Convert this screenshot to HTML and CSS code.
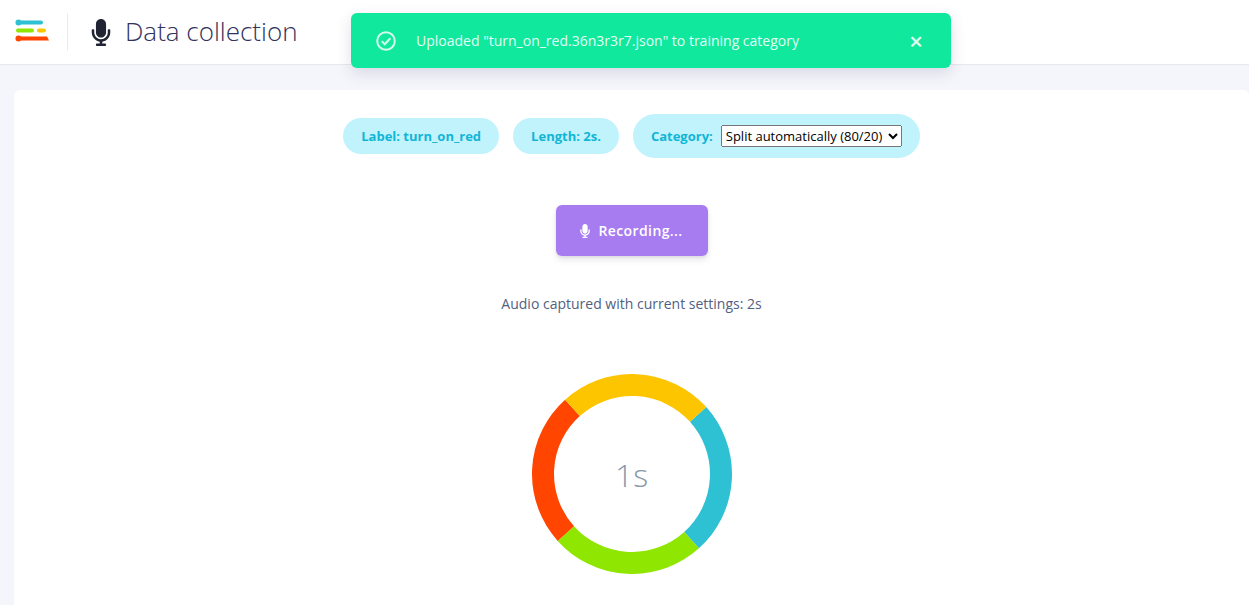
FILE: index.html
```html
<!DOCTYPE html>
<html lang="en">
<head>
    <meta charset="UTF-8">
    <meta name="viewport" content="width=device-width, initial-scale=1.0">
    <title>Data collection</title>
    <link rel="stylesheet" href="styles.css">
</head>
<body>
    <header class="topbar">
        <svg class="logo" width="34" height="24" viewBox="0 0 34 24">
            <rect x="1" y="1.5" width="27" height="4" rx="2" fill="#2ec0d3"/>
            <circle cx="3.5" cy="3.5" r="3" fill="#2ec0d3"/>
            <rect x="1" y="9.5" width="18" height="4" rx="2" fill="#8fe600"/>
            <rect x="22" y="9.5" width="9" height="4" rx="2" fill="#fdc500"/>
            <path d="M3 17.5H32L34 21.5H3Z" fill="#ff4500"/>
            <circle cx="3.5" cy="19.5" r="3" fill="#ff4500"/>
        </svg>
        <div class="divider"></div>
        <svg class="title-icon" width="20" height="27" viewBox="0 0 352 512">
            <path fill="#1f2333" d="M176 352c53 0 96-43 96-96V96c0-53-43-96-96-96S80 43 80 96v160c0 53 43 96 96 96zm160-160h-16c-9 0-16 7-16 16v48c0 75-64.500 134-140 127-66-6-116-65-116-131v-44c0-9-7-16-16-16H16c-9 0-16 7-16 16v40c0 90 64 170 152 182v34H96c-9 0-16 7-16 16v16c0 9 7 16 16 16h160c9 0 16-7 16-16v-16c0-9-7-16-16-16h-56v-34c86-12 152-86 152-174v-48c0-9-7-16-16-16z"/>
        </svg>
        <h1 class="title">Data collection</h1>
    </header>

    <div class="toast">
        <svg class="toast-icon" width="20" height="20" viewBox="0 0 20 20" fill="none" stroke="#d5fbec" stroke-width="2">
            <circle cx="10" cy="10" r="8.800"/>
            <path d="M5.800 10.300l3 3 5.500-6"/>
        </svg>
        <span class="toast-text">Uploaded "turn_on_red.36n3r3r7.json" to training category</span>
        <span class="toast-close">&times;</span>
    </div>

    <main class="card">
        <div class="badges">
            <span class="badge">Label: turn_on_red</span>
            <span class="badge">Length: 2s.</span>
            <span class="badge badge-select">
                Category:
                <select class="category">
                    <option>Split automatically (80/20)</option>
                </select>
            </span>
        </div>

        <button class="record-btn">
            <svg width="10" height="14" viewBox="0 0 352 512">
                <path fill="#fff" d="M176 352c53 0 96-43 96-96V96c0-53-43-96-96-96S80 43 80 96v160c0 53 43 96 96 96zm160-160h-16c-9 0-16 7-16 16v48c0 75-64.500 134-140 127-66-6-116-65-116-131v-44c0-9-7-16-16-16H16c-9 0-16 7-16 16v40c0 90 64 170 152 182v34H96c-9 0-16 7-16 16v16c0 9 7 16 16 16h160c9 0 16-7 16-16v-16c0-9-7-16-16-16h-56v-34c86-12 152-86 152-174v-48c0-9-7-16-16-16z"/>
            </svg>
            Recording...
        </button>

        <p class="captured">Audio captured with current settings: 2s</p>

        <div class="timer">
            <svg width="200" height="200" viewBox="0 0 200 200" fill="none" stroke-width="22">
                <circle class="seg" cx="100" cy="100" r="89" pathLength="360" stroke="#2ec0d3" stroke-dasharray="90 270" transform="rotate(-42 100 100)"/>
                <circle class="seg" cx="100" cy="100" r="89" pathLength="360" stroke="#8fe600" stroke-dasharray="90 270" transform="rotate(48 100 100)"/>
                <circle class="seg" cx="100" cy="100" r="89" pathLength="360" stroke="#ff4500" stroke-dasharray="90 270" transform="rotate(138 100 100)"/>
                <circle class="seg" cx="100" cy="100" r="89" pathLength="360" stroke="#fdc500" stroke-dasharray="90 270" transform="rotate(228 100 100)"/>
            </svg>
            <span class="timer-text">1s</span>
        </div>
    </main>
</body>
</html>
```

FILE: styles.css
```css
html, body {
    height: 100%;
}
body {
    margin: 0;
    overflow: hidden;
    background-color: #f5f6fb;
    font-family: "Open Sans", sans-serif;
    color: #525f7f;
}
.topbar {
    display: flex;
    align-items: center;
    height: 64px;
    background: #fff;
    border-bottom: 1px solid #e6e8ee;
}
.logo {
    margin-left: 15px;
    margin-bottom: 3px;
}
.divider {
    width: 1px;
    height: 38px;
    margin: 0 23px 0 18px;
    background: #e9ebef;
}
.title {
    margin: 0 0 2px 14px;
    font-size: 26px;
    font-weight: 300;
    line-height: 1;
    color: #32325d;
}
.toast {
    position: absolute;
    top: 13px;
    left: 351px;
    display: flex;
    align-items: center;
    box-sizing: border-box;
    width: 600px;
    height: 55px;
    padding: 0 28px 0 25px;
    border-radius: 6px;
    background: #0fe89d;
    box-shadow: 0 5px 15px rgba(50, 50, 93, 0.15);
    color: #e4fcf3;
    font-size: 14px;
}
.toast-text {
    flex: 1;
    margin-left: 20px;
}
.toast-close {
    font-size: 24px;
    font-weight: 600;
    line-height: 1;
}
.card {
    display: flex;
    flex-direction: column;
    align-items: center;
    margin: 25px 0 0 14px;
    height: 600px;
    padding-top: 24px;
    border-radius: 6px;
    background: #fff;
}
.badges {
    display: flex;
    align-items: center;
    gap: 14px;
    height: 44px;
}
.badge {
    display: flex;
    align-items: center;
    height: 36px;
    padding: 0 18px;
    border-radius: 22px;
    background: #c0f3fc;
    color: #11b5d6;
    font-size: 13px;
    font-weight: 700;
}
.badge-select {
    height: 44px;
}
.category {
    width: 181px;
    margin-left: 8px;
    font-family: "Open Sans", sans-serif;
    font-size: 13px;
}
.record-btn {
    display: flex;
    align-items: center;
    justify-content: center;
    gap: 8px;
    width: 152px;
    height: 51px;
    margin-top: 47px;
    border: none;
    border-radius: 6px;
    background: #a67cf0;
    box-shadow: 0 4px 6px rgba(50, 50, 93, 0.11), 0 1px 3px rgba(0, 0, 0, 0.08);
    color: #fff;
    font-family: "Open Sans", sans-serif;
    font-size: 14px;
    font-weight: 600;
    letter-spacing: 0.4px;
}
.captured {
    margin: 38px 0 0;
    font-size: 14px;
    line-height: 20px;
}
.timer {
    position: relative;
    width: 200px;
    height: 200px;
    margin-top: 60px;
}
.timer-text {
    position: absolute;
    inset: 0;
    display: flex;
    align-items: center;
    justify-content: center;
    font-size: 32px;
    font-weight: 300;
    color: #8898aa;
}
```
